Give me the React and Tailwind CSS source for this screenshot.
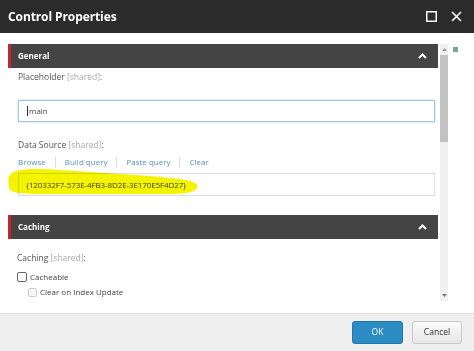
import React from "react";

const font = { fontFamily: '"Open Sans", "Noto Sans", Arial, sans-serif' };

function SectionHeader({ title }) {
  return (
    <div className="flex h-[24px] items-center justify-between border-l-[3px] border-[#c1272d] bg-[#444444] pl-[7px] pr-[11px]">
      <span className="text-[8px] font-bold text-white">{title}</span>
      <svg width="9" height="6" viewBox="0 0 9 6">
        <path d="M1 5 L4.5 1.5 L8 5" fill="none" stroke="#fff" strokeWidth="2" />
      </svg>
    </div>
  );
}

function Label({ text, className = "" }) {
  return (
    <div className={"h-[12px] text-[8.5px] leading-[12px] text-[#555] " + className}>
      {text} <span className="text-[#aaa]">[shared]</span>:
    </div>
  );
}

export default function App() {
  return (
    <div style={font} className="flex h-[351px] w-[474px] flex-col overflow-hidden bg-white">
      {/* Title bar */}
      <div className="flex h-[33px] shrink-0 items-center justify-between bg-[#2b2b2b] pl-[8px] pr-[12px]">
        <span className="text-[12px] font-bold tracking-[-0.1px] text-white">Control Properties</span>
        <div className="flex items-center gap-[14px]">
          <svg width="11" height="11" viewBox="0 0 11 11">
            <rect x="0.75" y="0.75" width="9.5" height="9.5" fill="none" stroke="#fff" strokeWidth="1.5" />
          </svg>
          <svg width="11" height="11" viewBox="0 0 11 11">
            <path d="M1 1 L10 10 M10 1 L1 10" stroke="#fff" strokeWidth="1.6" />
          </svg>
        </div>
      </div>

      {/* Body */}
      <div className="flex h-[280px] shrink-0 pt-[11px]">
        <div className="ml-[8px] h-[257px] w-[430px] shrink-0 overflow-hidden">
          <SectionHeader title="General" />
          <div className="pl-[10px] pr-[3px]">
            <Label text="Placeholder" className="mt-[3px]" />
            <div className="mt-[17px] flex h-[22px] items-center border border-[#9ec8e8] px-[8px] text-[8px] text-[#444] shadow-[0_0_2px_rgba(100,160,210,0.5)]">
              <span className="mr-px inline-block h-[10px] w-px bg-[#333]" />
              main
            </div>
            <Label text="Data Source" className="mt-[17px]" />
            <div className="mt-[5px] flex h-[12px] items-center text-[8px] leading-[12px] text-[#5a93c2]">
              <span>Browse</span>
              <span className="mx-[9px] h-[11px] w-px bg-[#ddd]" />
              <span>Build query</span>
              <span className="mx-[9px] h-[11px] w-px bg-[#ddd]" />
              <span>Paste query</span>
              <span className="mx-[9px] h-[11px] w-px bg-[#ddd]" />
              <span>Clear</span>
            </div>
            <div className="relative mt-[5px]">
              <div className="flex h-[23px] items-center border border-[#ddd] px-[7px] text-[8px] tracking-[-0.1px] text-[#444]">
                {"{120332F7-573E-4FB3-8D2E-3E170E5F4D27}"}
              </div>
              {/* yellow highlighter */}
              <svg
                className="pointer-events-none absolute left-[-18px] top-[-13px] mix-blend-multiply"
                width="210"
                height="45"
                viewBox="0 0 210 45"
              >
                <path
                  d="M10 15 C14 9 30 8 60 10 L150 16 C180 19 195 20 197 25 C199 31 190 34 170 34 L40 34 C20 34 9 33 9 27 C8 21 8 17 10 15 Z"
                  fill="#f4f400"
                />
              </svg>
            </div>
          </div>

          <div className="mt-[19px]">
            <SectionHeader title="Caching" />
          </div>
          <div className="pl-[9px]">
            <Label text="Caching" className="mt-[13px]" />
            <div className="mt-[7px] flex h-[12px] items-center gap-[3px] text-[8px] text-[#444]">
              <span className="h-[10px] w-[10px] rounded-[2px] border border-[#666] bg-white" />
              Cacheable
            </div>
            <div className="ml-[11px] mt-[3px] flex h-[12px] items-center gap-[3px] text-[8px] text-[#444]">
              <span className="h-[9px] w-[9px] rounded-[2px] border border-[#ccc] bg-[#f6f6f6]" />
              Clear on Index Update
            </div>
            <div className="ml-[11px] mt-[5px] flex h-[12px] items-start">
              <span className="h-[9px] w-[9px] rounded-[2px] border border-[#ccc] bg-[#f6f6f6]" />
            </div>
          </div>
        </div>

        {/* scrollbar */}
        <div className="ml-[2px] flex h-[257px] w-[8px] shrink-0 flex-col bg-[#f0f0f0]">
          <div className="flex h-[11px] items-center justify-center">
            <svg width="5" height="3" viewBox="0 0 5 3"><path d="M0 3 L2.5 0 L5 3 Z" fill="#999" /></svg>
          </div>
          <div className="h-[87px] bg-[#c2c2c2]" />
          <div className="flex-1" />
          <div className="flex h-[11px] items-center justify-center">
            <svg width="5" height="3" viewBox="0 0 5 3"><path d="M0 0 L2.5 3 L5 0 Z" fill="#777" /></svg>
          </div>
        </div>

        <div className="ml-[5px] mt-[3px] h-[5px] w-[5px] bg-[#78a890]" />
      </div>

      {/* Footer */}
      <div className="flex flex-1 items-center justify-end gap-[9px] border-t border-[#e0e0e0] bg-[#efefef] pr-[12px]">
        <button className="h-[23px] w-[51px] rounded-[3px] border border-[#1f77a8] bg-[#2a8cc2] text-[8.5px] text-white">
          OK
        </button>
        <button className="h-[23px] w-[50px] rounded-[3px] border border-[#c8c8c8] bg-gradient-to-b from-[#fafafa] to-[#e6e6e6] text-[8.5px] text-[#333]">
          Cancel
        </button>
      </div>
    </div>
  );
}
